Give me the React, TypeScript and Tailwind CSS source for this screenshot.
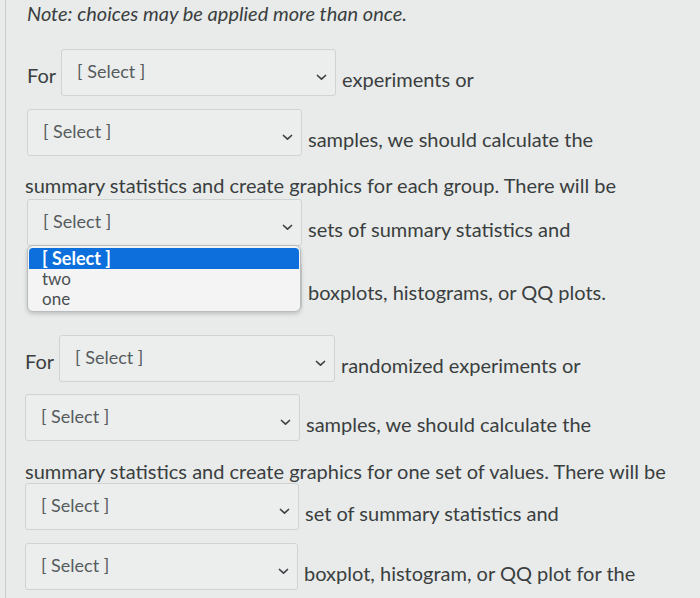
import React from "react";

const Chevron = () => (
  <svg width="11" height="7" viewBox="0 0 11 7" fill="none" className="absolute right-[8px] top-1/2 mt-[1px]">
    <path d="M1.5 1.5 L5.5 5.2 L9.5 1.5" stroke="#3d4144" strokeWidth="1.7" strokeLinecap="round" strokeLinejoin="round" />
  </svg>
);

const SelectBox = ({ w = "w-[275px]", hidden, children }: { w?: string; hidden?: boolean; children?: React.ReactNode }) => (
  <div className={`relative ${w} h-[47px] shrink-0 rounded-[3px] border border-[#cfd3d2] bg-[#eceeed] flex items-center pl-[15px] pb-[4px] text-[18px] text-[#565b5d]`}>
    {!hidden && "[ Select ]"}
    <Chevron />
    {children}
  </div>
);

const Row = ({ lead, after, className = "", w, hidden, children }: { lead?: string; after: string; className?: string; w?: string; hidden?: boolean; children?: React.ReactNode }) => (
  <div className={`flex items-center ${className}`}>
    {lead && <span className="mr-[5px] pt-[4px]">{lead}</span>}
    <SelectBox w={w} hidden={hidden}>{children}</SelectBox>
    <span className="ml-[6px] pt-[12px] whitespace-nowrap">{after}</span>
  </div>
);

export default function App() {
  return (
    <div className="w-[700px] h-[598px] overflow-hidden bg-[#e8ebe9] font-['Lato',sans-serif] text-[20px] leading-[26px] text-[#3a3e40]">
      <div className="ml-[5px] h-full border-l border-[#c9cccb] pl-[21px] pt-[1px]">
        <p className="italic leading-[24px]">Note: choices may be applied more than once.</p>

        <Row lead="For" after="experiments or" className="mt-[24px]" />
        <Row after="samples, we should calculate the" className="mt-[13px]" />

        <p className="mt-[16px] -ml-[2px]">summary statistics and create graphics for each group. There will be</p>

        <Row after="sets of summary statistics and" className="mt-[1px] relative z-10">
          {/* open option list */}
          <div className="absolute left-[-1px] top-[45px] w-[274px] h-[67px] rounded-[6px] border border-[#b9bcbc] bg-[#f3f4f3] shadow-[0_2px_4px_rgba(0,0,0,0.18)] pt-[2px] text-[17px] leading-[20px] overflow-hidden">
            <div className="mx-[1px] h-[21px] rounded-t-[4px] bg-[#0c6fdc] text-white font-bold pl-[13px] text-[18px] leading-[21px]">[ Select ]</div>
            <div className="pl-[14px] text-[#4a4f51]">two</div>
            <div className="pl-[14px] text-[#4a4f51]">one</div>
          </div>
        </Row>
        <Row after="boxplots, histograms, or QQ plots." className="mt-[16px]" hidden />

        <Row lead="For" after="randomized experiments or" className="mt-[26px] -ml-[2px]" w="w-[276px]" />
        <Row after="samples, we should calculate the" className="mt-[12px] -ml-[2px]" />

        <p className="mt-[17px] -ml-[2px]">summary statistics and create graphics for one set of values. There will be</p>

        <Row after="set of summary statistics and" className="-mt-[1px] -ml-[2px]" w="w-[274px]" />
        <Row after="boxplot, histogram, or QQ plot for the" className="mt-[13px] -ml-[2px]" w="w-[273px]" />
      </div>
    </div>
  );
}
